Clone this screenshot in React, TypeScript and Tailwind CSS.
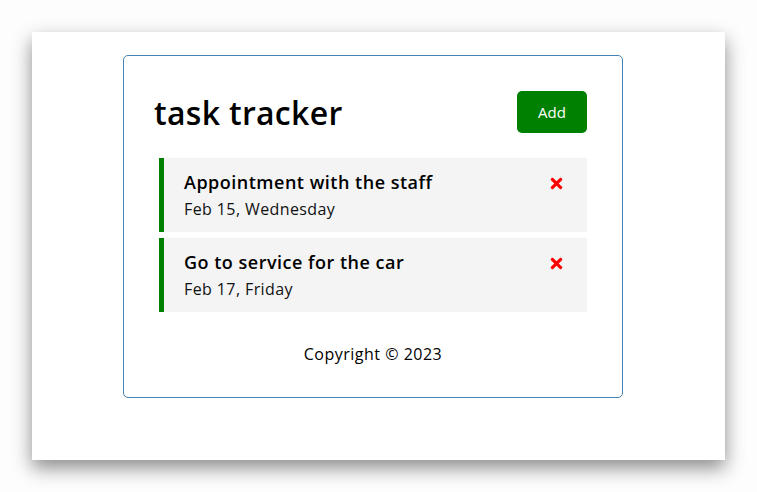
import React from 'react';
import { FaTimes } from 'react-icons/fa';

interface Task {
  id: number;
  text: string;
  day: string;
}

const tasks: Task[] = [
  { id: 1, text: 'Appointment with the staff', day: 'Feb 15, Wednesday' },
  { id: 2, text: 'Go to service for the car', day: 'Feb 17, Friday' },
];

const TaskItem = ({ task }: { task: Task }) => {
  return (
    <div className="mx-[5px] mb-[6px] flex items-start justify-between border-l-[5px] border-[#008000] bg-[#f4f4f4] py-[11px] pl-[20px] pr-[22px]">
      <div>
        <h3 className="text-[18px] font-semibold leading-[27px] tracking-[0.5px] text-black">{task.text}</h3>
        <p className="mt-[1px] text-[16px] leading-[24px] tracking-[0.4px] text-[#111]">{task.day}</p>
      </div>
      <FaTimes className="mt-[6px] h-[17px] w-[17px] text-[#ff0000]" />
    </div>
  );
};

const App = () => {
  return (
    <div
      className="h-[492px] w-[757px] bg-[#fdfdfd] p-8"
      style={{ fontFamily: '"Open Sans", "Noto Sans", sans-serif' }}
    >
      <div className="h-full w-full bg-white pt-[23px] pl-[91px] shadow-[0_8px_18px_rgba(0,0,0,0.45)]">
        <div className="w-[500px] rounded-[5px] border border-[#4682b4] px-[30px] pt-[30px] pb-[31px]">
          <header className="mb-[20px] flex items-center justify-between">
            <h1 className="mt-[1px] text-[32px] font-semibold leading-[48px] tracking-[0.3px] text-black">task tracker</h1>
            <button className="m-[5px] h-[42px] w-[70px] rounded-[5px] bg-[#008000] text-[15px] text-white">
              Add
            </button>
          </header>
          <div>
            {tasks.map((t) => (
              <TaskItem key={t.id} task={t} />
            ))}
          </div>
          <footer className="mt-[30px] text-center text-[16px] leading-[24px] tracking-[0.5px] text-black">
            Copyright &copy; 2023
          </footer>
        </div>
      </div>
    </div>
  );
};

export default App;
